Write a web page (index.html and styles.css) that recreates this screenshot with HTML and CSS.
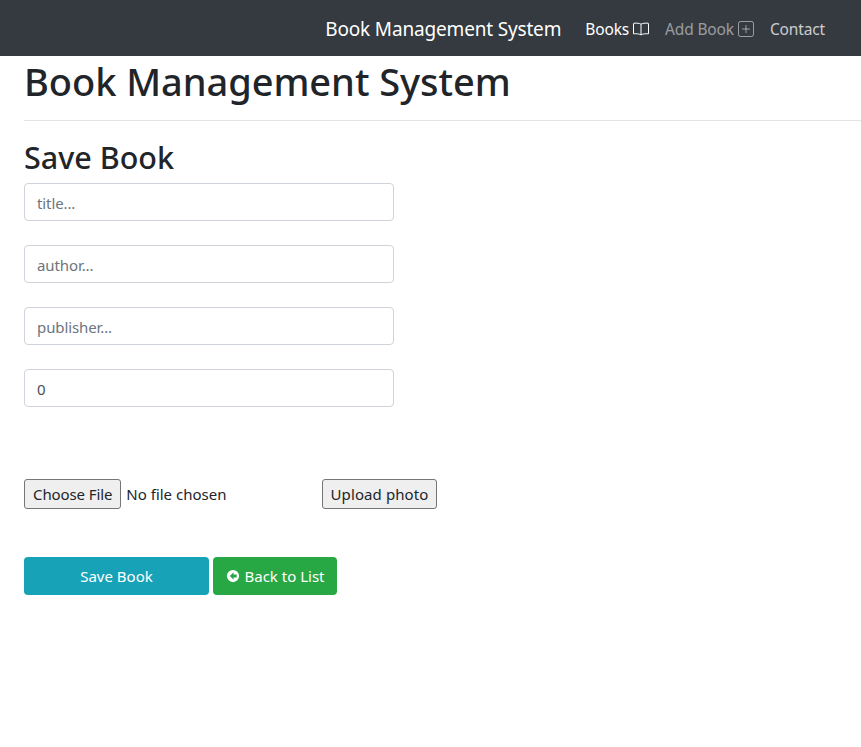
FILE: index.html
```html
<!DOCTYPE html>
<html lang="en">
<head>
    <meta charset="UTF-8">
    <title>Book Management System</title>
    <link rel="stylesheet" href="styles.css">
</head>
<body>
    <nav class="navbar">
        <a class="brand" href="#">Book Management System</a>
        <a class="nav-link active" href="#">Books
            <svg class="nav-icon" viewBox="0 0 16 16" fill="none" stroke="currentColor" stroke-width="1"><path d="M8 3.200C6.600 2.300 4 2 1 2.200a.5.500 0 0 0-.5.500v10.100c3-.2 5.800.1 7.500 1 1.700-.9 4.500-1.200 7.500-1V2.700a.5.500 0 0 0-.5-.5C12 2 9.400 2.300 8 3.200zM8 3.200V13.800"/></svg>
        </a>
        <a class="nav-link muted" href="#">Add Book
            <svg class="nav-icon" viewBox="0 0 16 16" fill="none" stroke="currentColor" stroke-width="1"><rect x="0.5" y="0.5" width="15" height="15" rx="2"/><path d="M8 4v8M4 8h8"/></svg>
        </a>
        <a class="nav-link" href="#">Contact</a>
    </nav>

    <div class="container">
        <h1>Book Management System</h1>
        <hr>
        <h2>Save Book</h2>
        <form>
            <div class="form-group"><input class="form-control" type="text" placeholder="title..."></div>
            <div class="form-group"><input class="form-control" type="text" placeholder="author..."></div>
            <div class="form-group"><input class="form-control" type="text" placeholder="publisher..."></div>
            <div class="form-group"><input class="form-control" type="text" value="0"></div>

            <div class="upload-row">
                <input class="file-input" type="file">
                <button class="upload-btn" type="button">Upload photo</button>
            </div>

            <div class="actions">
                <button class="btn btn-save" type="submit">Save Book</button>
                <a class="btn btn-back" href="#">
                    <svg class="back-icon" viewBox="0 0 16 16"><path fill="currentColor" fill-rule="evenodd" d="M8 1a7 7 0 1 1 0 14A7 7 0 0 1 8 1zM8.600 3.800 4.400 8l4.200 4.200V9.700h3.600V6.300H8.600z"/></svg>
                    Back to List
                </a>
            </div>
        </form>
    </div>
</body>
</html>
```

FILE: styles.css
```css
* {
    box-sizing: border-box;
}

body {
    margin: 0;
    background: white;
    color: #212529;
    font-family: "Noto Sans", "Open Sans", sans-serif;
    font-size: 16px;
}

a {
    text-decoration: none;
}

.navbar {
    display: flex;
    align-items: center;
    justify-content: flex-end;
    height: 56px;
    padding-top: 1px;
    padding-right: 36px;
    background-color: #343a40;
}

.brand {
    margin-right: 24px;
    color: white;
    font-size: 19px;
    letter-spacing: -0.170px;
}

.nav-link {
    display: flex;
    align-items: center;
    gap: 4px;
    margin-right: 16px;
    color: rgba(255, 255, 255, 0.75);
    font-size: 15.500px;
    letter-spacing: -0.150px;
}

.nav-link:last-child {
    margin-right: 0;
}

.nav-link.active {
    color: white;
}

.nav-link.muted {
    color: rgba(255, 255, 255, 0.5);
}

.nav-icon {
    width: 16px;
    height: 16px;
    margin-top: 1px;
}

.container {
    padding-left: 24px;
}

h1 {
    margin: 1px 0 15px;
    font-size: 38px;
    font-weight: 500;
    line-height: 48px;
    letter-spacing: -0.050px;
}

hr {
    height: 1px;
    margin: 0 0 17px;
    border: 0;
    background: #e2e3e5;
}

h2 {
    margin: 0 0 7px;
    font-size: 30.500px;
    font-weight: 500;
    line-height: 38px;
}

.form-group {
    margin-bottom: 24px;
}

.form-control {
    display: block;
    width: 370px;
    height: 38px;
    padding: 7px 12px 5px;
    border: 1px solid #ced4da;
    border-radius: 4px;
    color: #495057;
    font-family: inherit;
    font-size: 15px;
    letter-spacing: -0.100px;
}

.form-control::placeholder {
    color: #6c757d;
}

.upload-row {
    display: flex;
    align-items: center;
    margin-top: 72px;
}

.file-input {
    width: 298px;
    font-family: inherit;
    font-size: 15px;
}

.file-input::file-selector-button {
    height: 30px;
    margin-right: 5px;
    padding: 0 8px;
    border: 1px solid #767676;
    border-radius: 3px;
    background: #efefef;
    color: #212529;
    font: inherit;
    letter-spacing: -0.100px;
}

.upload-btn {
    width: 115px;
    height: 30px;
    padding: 0;
    border: 1px solid #767676;
    border-radius: 3px;
    background: #efefef;
    color: #212529;
    font-family: inherit;
    font-size: 15px;
    letter-spacing: 0.100px;
}

.actions {
    display: flex;
    gap: 4px;
    margin-top: 48px;
}

.btn {
    display: flex;
    align-items: center;
    justify-content: center;
    height: 38px;
    border: 0;
    border-radius: 4px;
    color: white;
    font-family: inherit;
    font-size: 15px;
}

.btn-save {
    width: 185px;
    background-color: #17a2b8;
}

.btn-back {
    gap: 5px;
    width: 124px;
    background-color: #28a745;
}

.back-icon {
    width: 14px;
    height: 14px;
}
```
